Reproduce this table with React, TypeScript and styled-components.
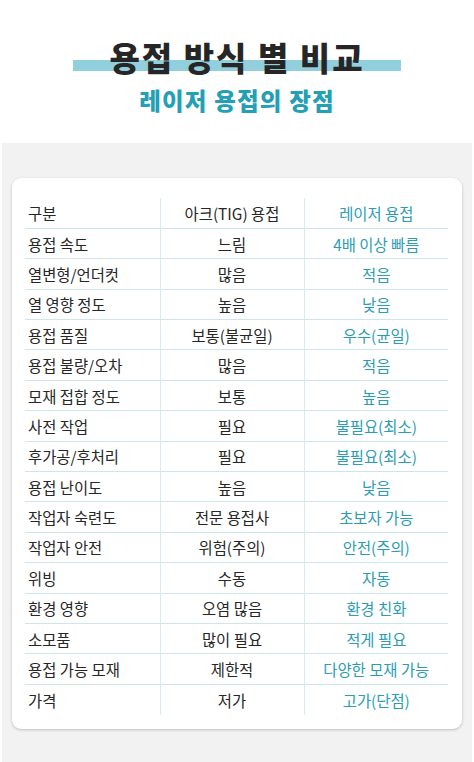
import styled, { createGlobalStyle } from "styled-components";

const GlobalStyle = createGlobalStyle`
  html, body {
    margin: 0;
    padding: 0;
    background: #ffffff;
  }
  body {
    font-family: "Noto Sans CJK KR", "Noto Sans", sans-serif;
  }
`;

const Page = styled.div`
  width: 474px;
  height: 762px;
  display: flex;
  flex-direction: column;
  overflow: hidden;
`;

const Header = styled.header`
  height: 143px;
  display: flex;
  flex-direction: column;
  align-items: center;
  padding-top: 35px;
  box-sizing: border-box;
`;

const TitleWrap = styled.div`
  position: relative;
  width: 328px;
  display: flex;
  justify-content: center;
`;

const TitleBar = styled.span`
  position: absolute;
  left: 0;
  right: 0;
  top: 25px;
  height: 11px;
  background: #92cfdc;
`;

const Title = styled.h1`
  position: relative;
  margin: 0;
  font-size: 33px;
  line-height: 44px;
  font-weight: 900;
  letter-spacing: 2px;
  color: #262626;
`;

const Subtitle = styled.h2`
  margin: 6px 0 0;
  font-size: 23.5px;
  line-height: 30px;
  font-weight: 900;
  letter-spacing: 1.2px;
  color: #239fb6;
`;

const Gray = styled.main`
  flex: 1;
  margin: 0 2px;
  background: #f2f2f2;
  padding: 35px 10px 0;
`;

const Card = styled.div`
  background: #ffffff;
  border-radius: 9px;
  box-shadow: 0 1px 3px rgba(0, 0, 0, 0.22);
  padding: 20px 14px 14px 13px;
`;

const Table = styled.table`
  width: 100%;
  border-collapse: collapse;
  table-layout: fixed;
`;

const Row = styled.tr`
  height: 30.4px;
  & + & td {
    border-top: 1px solid #cde6ec;
  }
`;

const Cell = styled.td<{ $col: number }>`
  padding: 0 ${(p) => (p.$col === 0 ? "3px" : "0")};
  font-size: 15.4px;
  line-height: 20px;
  white-space: nowrap;
  text-align: ${(p) => (p.$col === 0 ? "left" : "center")};
  color: ${(p) => (p.$col === 2 ? "#2a9db3" : "#262626")};
  border-left: ${(p) => (p.$col === 0 ? "none" : "1px solid #d6eaef")};
  vertical-align: middle;
`;

const rows: [string, string, string][] = [
  ["구분", "아크(TIG) 용접", "레이저 용접"],
  ["용접 속도", "느림", "4배 이상 빠름"],
  ["열변형/언더컷", "많음", "적음"],
  ["열 영향 정도", "높음", "낮음"],
  ["용접 품질", "보통(불균일)", "우수(균일)"],
  ["용접 불량/오차", "많음", "적음"],
  ["모재 접합 정도", "보통", "높음"],
  ["사전 작업", "필요", "불필요(최소)"],
  ["후가공/후처리", "필요", "불필요(최소)"],
  ["용접 난이도", "높음", "낮음"],
  ["작업자 숙련도", "전문 용접사", "초보자 가능"],
  ["작업자 안전", "위험(주의)", "안전(주의)"],
  ["위빙", "수동", "자동"],
  ["환경 영향", "오염 많음", "환경 친화"],
  ["소모품", "많이 필요", "적게 필요"],
  ["용접 가능 모재", "제한적", "다양한 모재 가능"],
  ["가격", "저가", "고가(단점)"],
];

export default function App() {
  return (
    <Page>
      <GlobalStyle />
      <Header>
        <TitleWrap>
          <TitleBar />
          <Title>용접 방식 별 비교</Title>
        </TitleWrap>
        <Subtitle>레이저 용접의 장점</Subtitle>
      </Header>
      <Gray>
        <Card>
          <Table>
            <colgroup>
              <col style={{ width: "135px" }} />
              <col style={{ width: "144px" }} />
              <col />
            </colgroup>
            <tbody>
              {rows.map((r) => (
                <Row key={r[0]}>
                  {r.map((c, i) => (
                    <Cell key={i} $col={i}>
                      {c}
                    </Cell>
                  ))}
                </Row>
              ))}
            </tbody>
          </Table>
        </Card>
      </Gray>
    </Page>
  );
}
